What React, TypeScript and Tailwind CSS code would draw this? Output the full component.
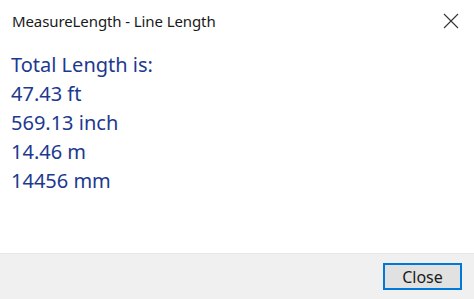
import React from 'react';

const lines = ['Total Length is:', '47.43 ft', '569.13 inch', '14.46 m', '14456 mm'];

const App: React.FC = () => {
  return (
    <div className="w-[474px] h-[299px] bg-white flex flex-col font-['Noto_Sans',sans-serif] overflow-hidden">
      <div className="h-[42px] flex items-center justify-between pl-[12px] pr-[15px]">
        <span className="text-[15px] text-[#1a1a1a] tracking-[-0.1px]">MeasureLength - Line Length</span>
        <svg width="16" height="16" viewBox="0 0 16 16" className="text-[#333]">
          <path d="M1 1 L15 15 M15 1 L1 15" stroke="currentColor" strokeWidth="1.1" fill="none" />
        </svg>
      </div>
      <div className="flex-1 pl-[11px] pt-[8px]">
        {lines.map(l => (
          <div key={l} className="text-[20px] leading-[29px] text-[#1c3990]">{l}</div>
        ))}
      </div>
      <div className="h-[46px] bg-[#f0f0f0] border-t border-[#e6e6e6] flex items-start justify-end pr-[12px] pt-[9px]">
        <button className="w-[79px] h-[27px] bg-[#e1e1e1] border-2 border-[#0078d7] text-[16px] text-[#1a1a1a] flex items-center justify-center">
          Close
        </button>
      </div>
    </div>
  );
};

export default App;
